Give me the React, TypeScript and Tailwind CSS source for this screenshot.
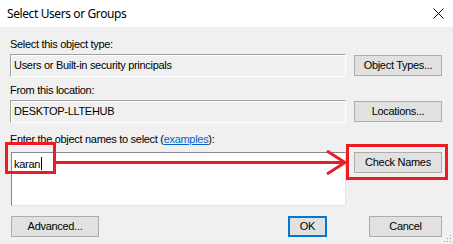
import React from 'react'

const font = { fontFamily: '"Liberation Sans", Arial, sans-serif' }

function Button({ label, className = '' }: { label: string; className?: string }) {
  return (
    <div
      className={`flex h-[21px] items-center justify-center border border-[#adadad] bg-[#e1e1e1] text-[11px] text-black ${className}`}
    >
      {label}
    </div>
  )
}

function ReadOnlyBox({ value }: { value: string }) {
  return (
    <div className="flex h-[23px] w-[336px] items-center border border-t-[#a0a0a0] border-l-[#a0a0a0] border-b-white border-r-white bg-[#f0f0f0] pl-[3px] text-[11px] text-black shadow-[inset_1px_1px_0_#ffffff]">
      {value}
    </div>
  )
}

export default function App() {
  return (
    <div
      className="relative flex h-[244px] w-[453px] flex-col overflow-hidden bg-[#f0f0f0] tracking-[-0.3px]"
      style={font}
    >
      {/* Title bar */}
      <div className="flex h-[27px] items-center justify-between bg-white pl-[7px] pr-[8px]">
        <span
          className="text-[12px] tracking-[-0.4px] text-black"
          style={{ fontFamily: '"Noto Sans", "Open Sans", sans-serif' }}
        >
          Select Users or Groups
        </span>
        <svg width="11" height="11" viewBox="0 0 11 11" className="mr-[1px]">
          <path d="M0.5 0.5 L10.5 10.5 M10.5 0.5 L0.5 10.5" stroke="#000" strokeWidth="1" />
        </svg>
      </div>

      {/* Body */}
      <div className="flex flex-col pl-[10px] pr-[11px] text-[11px] leading-[13px] text-black">
        <div className="mt-[11px]">Select this object type:</div>
        <div className="mt-[3px] flex items-center gap-[8px]">
          <ReadOnlyBox value="Users or Built-in security principals" />
          <Button label="Object Types..." className="w-[88px]" />
        </div>

        <div className="mt-[7px]">From this location:</div>
        <div className="mt-[3px] flex items-center gap-[8px]">
          <ReadOnlyBox value="DESKTOP-LLTEHUB" />
          <Button label="Locations..." className="w-[88px]" />
        </div>

        <div className="mt-[10px]">
          <span className="underline decoration-black underline-offset-[1px]">E</span>nter the object names to select (
          <span className="text-[#0066cc] underline">examples</span>):
        </div>
        <div className="mt-[6px] flex items-start gap-[8px]">
          <div className="ml-[1px] h-[54px] w-[335px] border border-t-[#828790] border-l-[#828790] border-b-[#e3e3e3] border-r-[#e3e3e3] bg-white pl-[2px] pt-[2px]">
            <span>karan</span>
            <span className="ml-[1px] inline-block h-[13px] w-px translate-y-[2px] bg-black" />
          </div>
          <Button label="Check Names" className="w-[88px]" />
        </div>

        <div className="mt-[10px] flex items-center">
          <Button label="Advanced..." className="ml-[1px] w-[88px]" />
          <div className="ml-auto flex items-center gap-[42px]">
            <div className="flex h-[21px] w-[39px] items-center justify-center border-2 border-[#0078d7] bg-[#e1e1e1]">
              OK
            </div>
            <Button label="Cancel" className="w-[73px]" />
          </div>
        </div>
      </div>

      {/* Size grip */}
      <svg width="8" height="8" viewBox="0 0 8 8" className="absolute bottom-[1px] right-[1px]">
        <rect x="6" y="0" width="1" height="1" fill="#a0a0a0" />
        <rect x="3" y="3" width="1" height="1" fill="#a0a0a0" />
        <rect x="6" y="3" width="1" height="1" fill="#a0a0a0" />
        <rect x="0" y="6" width="1" height="1" fill="#a0a0a0" />
        <rect x="3" y="6" width="1" height="1" fill="#a0a0a0" />
        <rect x="6" y="6" width="1" height="1" fill="#a0a0a0" />
      </svg>

      {/* Red annotations */}
      <div className="absolute left-[5px] top-[142px] h-[32px] w-[51px] border-[3px] border-[#ed1c24]" />
      <div className="absolute left-[346px] top-[144px] h-[36px] w-[102px] border-[3px] border-[#ed1c24]" />
      <svg width="453" height="244" className="pointer-events-none absolute left-0 top-0">
        <path d="M56 162.5 L344 162.5" stroke="#ed1c24" strokeWidth="3" />
        <path d="M327 151 L345 162.5 L327 174" stroke="#ed1c24" strokeWidth="3" fill="none" />
      </svg>
    </div>
  )
}
